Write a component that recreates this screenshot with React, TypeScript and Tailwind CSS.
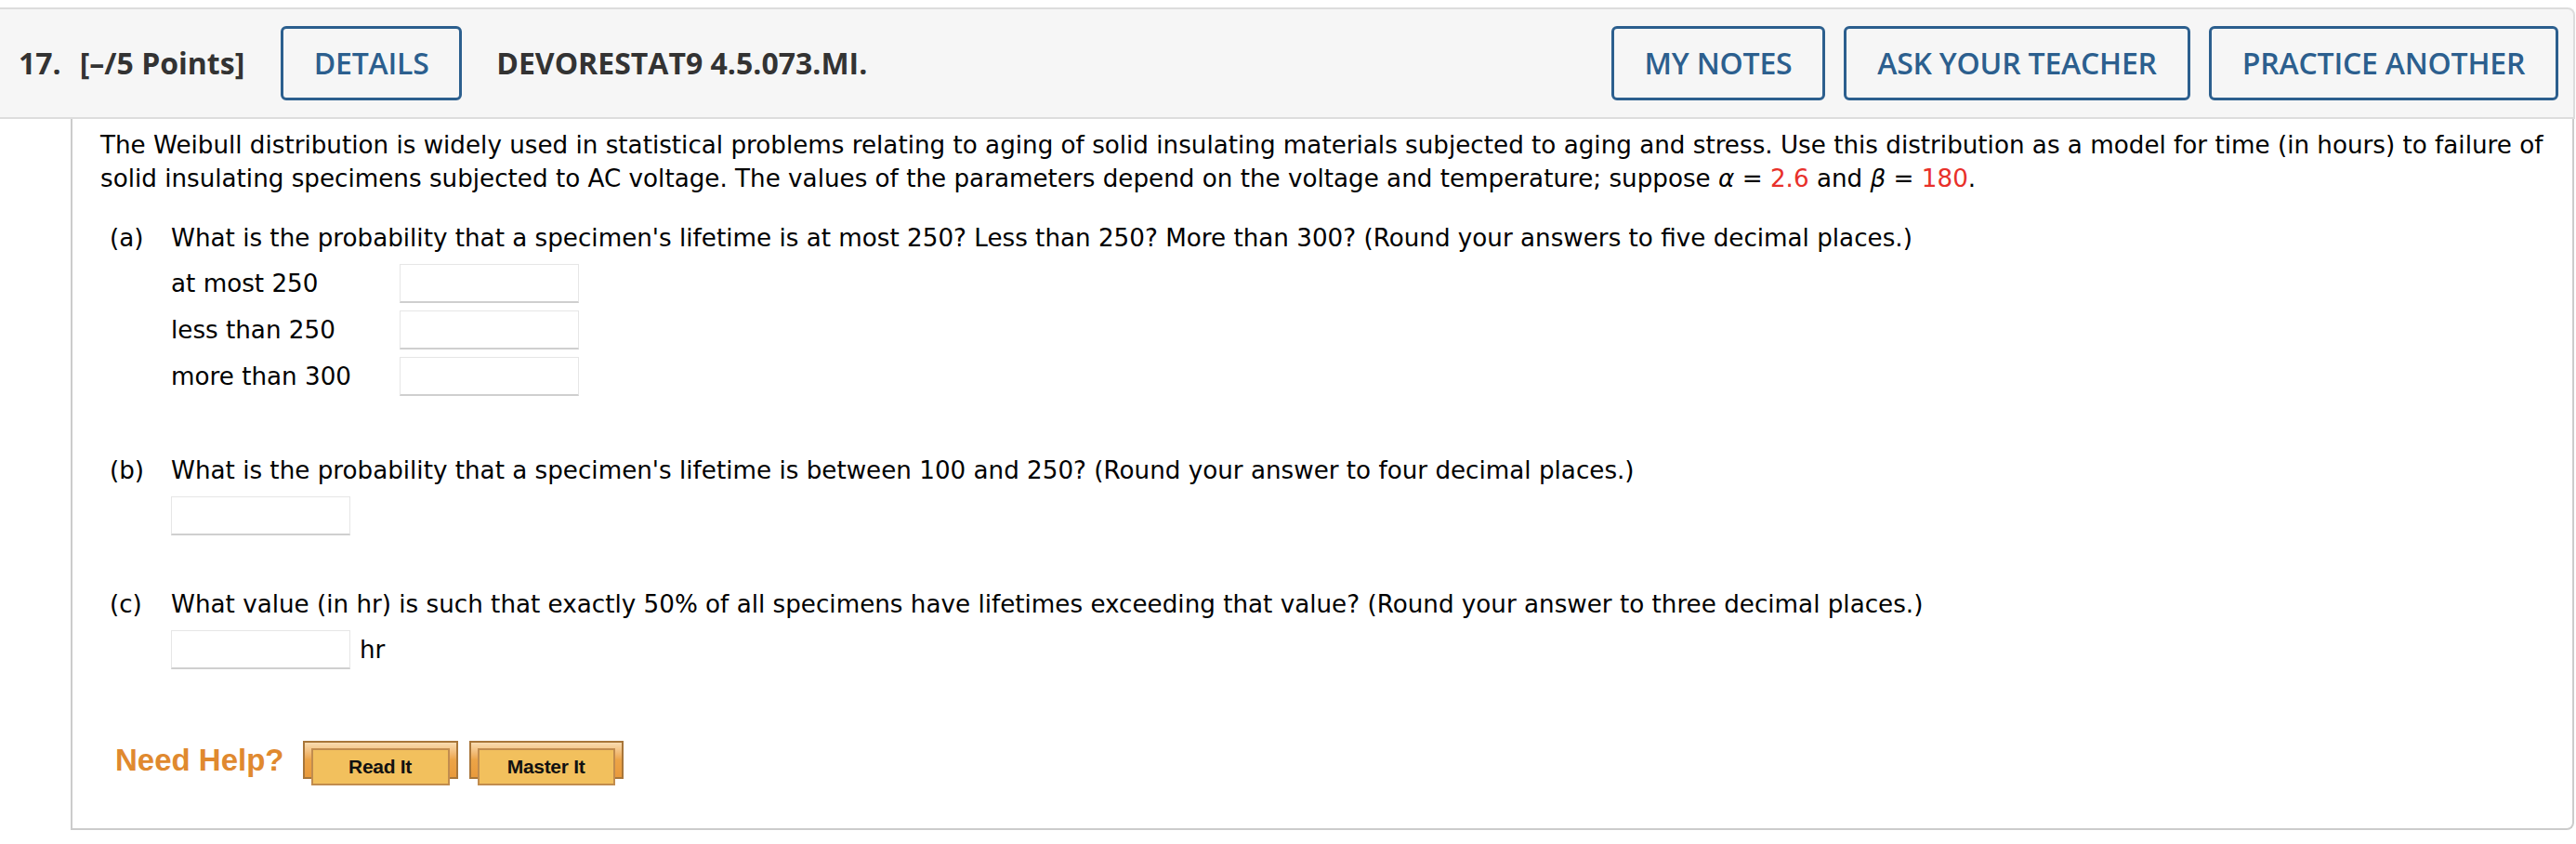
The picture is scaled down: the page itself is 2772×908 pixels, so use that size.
import React from 'react'

const HEAD_FONT = { fontFamily: '"Open Sans", "Liberation Sans", sans-serif' }

function OutlineButton({ label, width }: { label: string; width: string }) {
  return (
    <button
      className={`h-[80px] ${width} shrink-0 rounded-[6px] border-[3px] border-[#2c5f8e] bg-[#f6f6f6] text-[32px] font-semibold tracking-[-0.2px] text-[#2c5f8e]`}
    >
      {label}
    </button>
  )
}

function AnswerBox({ className = '' }: { className?: string }) {
  return (
    <div
      className={`h-[42px] w-[193px] border border-[#e6e6e6] border-b-2 border-b-[#cfcfcf] bg-white ${className}`}
    />
  )
}

function HelpButton({ label, width }: { label: string; width: string }) {
  return (
    <div
      className={`flex h-[41px] ${width} flex-col border-2 border-[#a8763a] bg-gradient-to-b from-[#f9dcb0] via-[#eca447] to-[#e99a3c] px-[7px] pt-[6px] pb-[6px]`}
    >
      <div className="flex flex-1 items-center justify-center border-2 border-[#c18c4e] bg-[#f2c05d] font-['Liberation_Sans',Arial,sans-serif] text-[21px] font-bold tracking-[-0.3px] text-[#111]">
        {label}
      </div>
    </div>
  )
}

export default function App() {
  return (
    <div className="min-h-[908px] w-[2772px] bg-white pt-[8px] text-black">
      {/* question header */}
      <div
        style={HEAD_FONT}
        className="flex h-[120px] w-[2771px] items-center rounded-tr-[8px] border-y-2 border-r-2 border-[#dddddd] bg-[#f6f6f6] pl-[20px] pr-[16px] text-[#333]"
      >
        <span className="text-[32px] font-bold">17.</span>
        <span className="ml-[20px] text-[32px] font-bold">[–/5 Points]</span>
        <div className="ml-[39px]">
          <OutlineButton label="DETAILS" width="w-[195px]" />
        </div>
        <span className="ml-[37px] text-[32px] font-bold">DEVORESTAT9 4.5.073.MI.</span>
        <div className="ml-auto flex gap-[20px]">
          <OutlineButton label="MY NOTES" width="w-[230px]" />
          <OutlineButton label="ASK YOUR TEACHER" width="w-[373px]" />
          <OutlineButton label="PRACTICE ANOTHER" width="w-[376px]" />
        </div>
      </div>

      {/* question body */}
      <div className="ml-[76px] h-[765px] w-[2694px] rounded-br-[8px] border-x-2 border-b-2 border-[#cccccc] pl-[30px] pt-[10px] font-['DejaVu_Sans',Verdana,sans-serif] text-[26.2px] leading-[36px]">
        <p>
          The Weibull distribution is widely used in statistical problems relating to aging of solid insulating
          materials subjected to aging and stress. Use this distribution as a model for time (in hours) to failure of
          <br />
          solid insulating specimens subjected to AC voltage. The values of the parameters depend on the voltage and
          temperature; suppose <i>α</i> = <span className="text-[#e8302a]">2.6</span> and <i>β</i> ={' '}
          <span className="text-[#e8302a]">180</span>.
        </p>

        {/* part a */}
        <div className="mt-[28px] flex">
          <span className="w-[76px] pl-[10px]">(a)</span>
          <div className="flex flex-col">
            <p>
              What is the probability that a specimen's lifetime is at most 250? Less than 250? More than 300? (Round
              your answers to five decimal places.)
            </p>
            <div className="mt-[10px] flex flex-col gap-[8px]">
              {['at most 250', 'less than 250', 'more than 300'].map(label => (
                <div key={label} className="flex items-center">
                  <span className="w-[246px]">{label}</span>
                  <AnswerBox />
                </div>
              ))}
            </div>
          </div>
        </div>

        {/* part b */}
        <div className="mt-[62px] flex">
          <span className="w-[76px] pl-[10px]">(b)</span>
          <div className="flex flex-col">
            <p>
              What is the probability that a specimen's lifetime is between 100 and 250? (Round your answer to four
              decimal places.)
            </p>
            <AnswerBox className="mt-[10px]" />
          </div>
        </div>

        {/* part c */}
        <div className="mt-[56px] flex">
          <span className="w-[76px] pl-[10px]">(c)</span>
          <div className="flex flex-col">
            <p>
              What value (in hr) is such that exactly 50% of all specimens have lifetimes exceeding that value? (Round
              your answer to three decimal places.)
            </p>
            <div className="mt-[10px] flex items-center">
              <AnswerBox />
              <span className="ml-[10px]">hr</span>
            </div>
          </div>
        </div>

        {/* help */}
        <div className="mt-[77px] ml-[16px] flex items-center">
          <span className="font-['Liberation_Sans',Arial,sans-serif] text-[33px] font-bold text-[#e0892f]">
            Need Help?
          </span>
          <div className="ml-[20px] flex gap-[12px]">
            <HelpButton label="Read It" width="w-[167px]" />
            <HelpButton label="Master It" width="w-[166px]" />
          </div>
        </div>
      </div>
    </div>
  )
}
